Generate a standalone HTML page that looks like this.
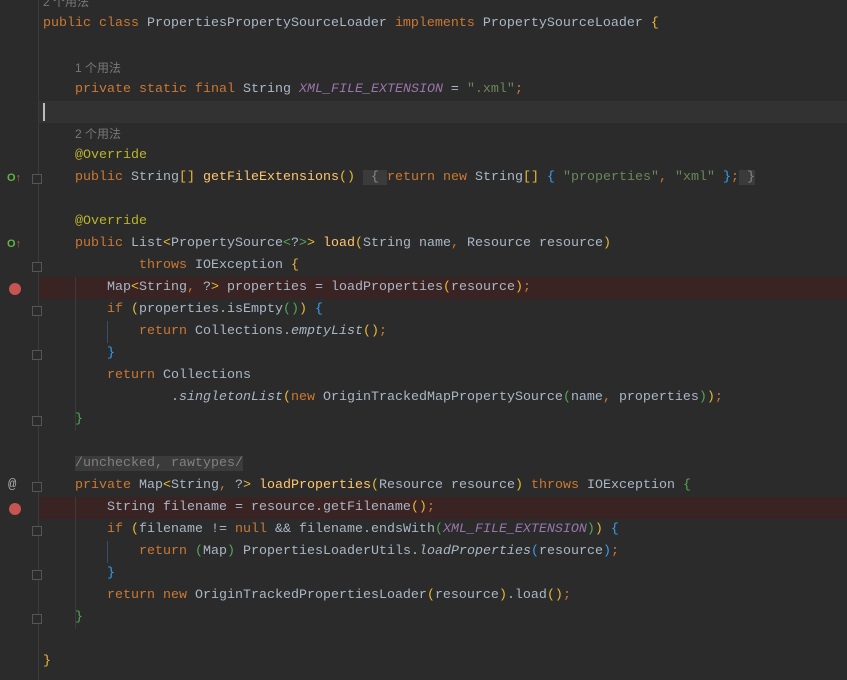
<!DOCTYPE html>
<html><head><meta charset="utf-8"><style>
body{margin:0;width:847px;height:674px;background:#2b2b2b;overflow:hidden;position:relative;font-family:"Liberation Mono",monospace;font-size:13.33px;color:#a9b7c6}
#w{position:absolute;left:0;top:2px;width:847px;height:674px}
.l{position:absolute;left:0;height:22px;line-height:22px;white-space:pre;width:847px}
.k{color:#cc7832}.m{color:#ffc66d}.a{color:#bbb529}.c{color:#9876aa;font-style:italic}.s{color:#6a8759}
.y{color:#e8ba36}.g{color:#54a857}.b{color:#359ff4}.i{font-style:italic}
.h{color:#787878;font-family:"Liberation Sans","Noto Sans CJK SC",sans-serif;font-size:12px}
.bg{position:absolute;left:38px;width:809px;height:22px}
.sep{position:absolute;left:38px;top:-2px;width:1px;height:680px;background:#3a3a3a}
.bp{position:absolute;left:9px;width:12px;height:12px;border-radius:50%;background:#c75450}
.fold{position:absolute;left:32px;width:8px;height:8px;border:1px solid #555;background:#2b2b2b}
.guide{position:absolute;width:1px;background:#3b3b3b}
.ov{position:absolute;left:7px;color:#62b543;font-size:11px;font-weight:bold;font-family:"Liberation Sans",sans-serif}
.ov b{color:#c75450}
</style></head><body><div id="w">
<div class="bg" style="top:99px;background:#323232"></div>
<div class="bg" style="top:275px;background:#3a2323"></div>
<div class="bg" style="top:495px;background:#3a2323"></div>
<div class="sep"></div>
<div style="position:absolute;left:43px;top:101px;width:2px;height:18px;background:#bbb"></div>
<div class="guide" style="left:75px;top:275px;height:154px"></div>
<div class="guide" style="left:107px;top:319px;height:22px;background:#35506b"></div>
<div class="guide" style="left:75px;top:495px;height:132px"></div>
<div class="guide" style="left:107px;top:539px;height:22px;background:#35506b"></div>
<div class="bp" style="top:281px"></div>
<div class="bp" style="top:501px"></div>
<div class="ov" style="top:170px">O<b>↑</b></div>
<div class="ov" style="top:236px">O<b>↑</b></div>
<div style="position:absolute;left:8px;top:475px;color:#aaa;font-size:14px">@</div>
<div class="fold" style="top:172px"></div>
<div class="fold" style="top:260px"></div>
<div class="fold" style="top:304px"></div>
<div class="fold" style="top:348px"></div>
<div class="fold" style="top:414px"></div>
<div class="fold" style="top:480px"></div>
<div class="fold" style="top:524px"></div>
<div class="fold" style="top:568px"></div>
<div class="fold" style="top:612px"></div>

<div class="l" style="top:-11px;padding-left:43px"><span class="h">2 个用法</span></div>
<div class="l" style="top:11px;padding-left:43px"><span class="k">public class </span>PropertiesPropertySourceLoader <span class="k">implements </span>PropertySourceLoader <span class="y">{</span></div>
<div class="l" style="top:55px;padding-left:75px"><span class="h">1 个用法</span></div>
<div class="l" style="top:77px;padding-left:75px"><span class="k">private static final </span>String <span class="c">XML_FILE_EXTENSION</span> = <span class="s">".xml"</span><span class="k">;</span></div>
<div class="l" style="top:121px;padding-left:75px"><span class="h">2 个用法</span></div>
<div class="l" style="top:143px;padding-left:75px"><span class="a">@Override</span></div>
<div class="l" style="top:165px;padding-left:75px"><span class="k">public </span>String<span class="y">[]</span> <span class="m">getFileExtensions</span><span class="y">()</span> <span style="background:#3b3b3b;color:#888"> { </span><span class="k">return new </span>String<span class="y">[]</span> <span class="b">{</span> <span class="s">"properties"</span><span class="k">, </span><span class="s">"xml"</span> <span class="b">}</span><span class="k">;</span><span style="background:#3b3b3b;color:#888"> }</span></div>
<div class="l" style="top:209px;padding-left:75px"><span class="a">@Override</span></div>
<div class="l" style="top:231px;padding-left:75px"><span class="k">public </span>List<span class="y">&lt;</span>PropertySource<span class="g">&lt;</span>?<span class="g">&gt;</span><span class="y">&gt;</span> <span class="m">load</span><span class="y">(</span>String name<span class="k">, </span>Resource resource<span class="y">)</span></div>
<div class="l" style="top:253px;padding-left:139px"><span class="k">throws </span>IOException <span class="y">{</span></div>
<div class="l" style="top:275px;padding-left:107px">Map<span class="y">&lt;</span>String<span class="k">, </span>?<span class="y">&gt;</span> properties = loadProperties<span class="y">(</span>resource<span class="y">)</span><span class="k">;</span></div>
<div class="l" style="top:297px;padding-left:107px"><span class="k">if </span><span class="y">(</span>properties.isEmpty<span class="g">()</span><span class="y">)</span> <span class="b">{</span></div>
<div class="l" style="top:319px;padding-left:139px"><span class="k">return </span>Collections.<span class="i">emptyList</span><span class="y">()</span><span class="k">;</span></div>
<div class="l" style="top:341px;padding-left:107px"><span class="b">}</span></div>
<div class="l" style="top:363px;padding-left:107px"><span class="k">return </span>Collections</div>
<div class="l" style="top:385px;padding-left:171px">.<span class="i">singletonList</span><span class="y">(</span><span class="k">new </span>OriginTrackedMapPropertySource<span class="g">(</span>name<span class="k">, </span>properties<span class="g">)</span><span class="y">)</span><span class="k">;</span></div>
<div class="l" style="top:407px;padding-left:75px"><span class="g">}</span></div>
<div class="l" style="top:451px;padding-left:75px"><span style="background:#3b3b3b;color:#808080">/unchecked, rawtypes/</span></div>
<div class="l" style="top:473px;padding-left:75px"><span class="k">private </span>Map<span class="y">&lt;</span>String<span class="k">, </span>?<span class="y">&gt;</span> <span class="m">loadProperties</span><span class="y">(</span>Resource resource<span class="y">)</span> <span class="k">throws </span>IOException <span class="g">{</span></div>
<div class="l" style="top:495px;padding-left:107px">String filename = resource.getFilename<span class="y">()</span><span class="k">;</span></div>
<div class="l" style="top:517px;padding-left:107px"><span class="k">if </span><span class="y">(</span>filename != <span class="k">null </span>&amp;&amp; filename.endsWith<span class="g">(</span><span class="c">XML_FILE_EXTENSION</span><span class="g">)</span><span class="y">)</span> <span class="b">{</span></div>
<div class="l" style="top:539px;padding-left:139px"><span class="k">return </span><span class="g">(</span>Map<span class="g">)</span> PropertiesLoaderUtils.<span class="i">loadProperties</span><span class="b">(</span>resource<span class="b">)</span><span class="k">;</span></div>
<div class="l" style="top:561px;padding-left:107px"><span class="b">}</span></div>
<div class="l" style="top:583px;padding-left:107px"><span class="k">return new </span>OriginTrackedPropertiesLoader<span class="y">(</span>resource<span class="y">)</span>.load<span class="y">()</span><span class="k">;</span></div>
<div class="l" style="top:605px;padding-left:75px"><span class="g">}</span></div>
<div class="l" style="top:649px;padding-left:43px"><span class="y">}</span></div>
</div></body></html>
